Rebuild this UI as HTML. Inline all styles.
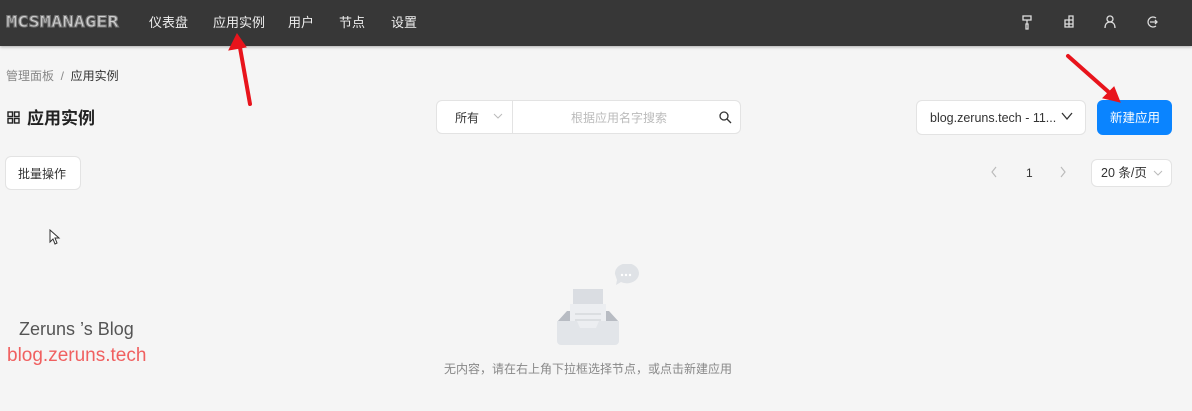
<!DOCTYPE html>
<html><head><meta charset="utf-8"><style>
*{box-sizing:border-box;margin:0;padding:0}
body{width:1192px;height:411px;background:#f5f5f5;font-family:"Liberation Sans","Noto Sans CJK SC",sans-serif;position:relative;overflow:hidden;color:#222}
.hdr{position:absolute;left:0;top:0;width:1192px;height:46px;background:#373737;box-shadow:0 1px 3px rgba(0,0,0,.3)}
.logo{position:absolute;left:6px;top:14px;font:bold 16px "DejaVu Sans Mono",monospace;color:#d0d0d0;-webkit-text-stroke:1px #777;line-height:1;transform:scaleX(1.17);transform-origin:0 0}
.nav{position:absolute;top:16px;font-size:13px;color:#eee;line-height:1}
.ab{position:absolute}
.box{position:absolute;background:#fff;border:1px solid #e3e3e3;border-radius:6px}
.t{position:absolute;white-space:nowrap;line-height:1}
</style></head><body>
<div class="hdr">
<div class="logo">MCSMANAGER</div>
<div class="nav" style="left:149px">仪表盘</div>
<div class="nav" style="left:213px">应用实例</div>
<div class="nav" style="left:288px">用户</div>
<div class="nav" style="left:339px">节点</div>
<div class="nav" style="left:391px">设置</div>
<svg class="ab" style="left:1020px;top:14px" width="150" height="16" fill="none" stroke="#ddd" stroke-width="1.3">
<rect x="3" y="2" width="8" height="4"/><path d="M7 6v4M6 10h2v5h-2z"/>
<path d="M45 6h4v4h-4zM49 6h4v4h-4zM49 2h4v4h-4zM45 10h4v3h-4zM49 10h4v3h-4z"/>
<circle cx="90" cy="5" r="3"/><path d="M85 14c0-4 2-6 5-6s5 2 5 6"/>
<path d="M136 4a5 5 0 1 0 0 8M130 8h7M135 6l2 2-2 2"/>
</svg>
</div>
<div class="t" style="left:6px;top:70px;font-size:12px;color:#888">管理面板 &nbsp;/&nbsp; <span style="color:#333">应用实例</span></div>
<svg class="ab" style="left:7px;top:111px" width="13" height="13" fill="none" stroke="#222" stroke-width="1.4"><rect x="1" y="1" width="4.5" height="4.5"/><rect x="7.5" y="1" width="4.5" height="4.5"/><rect x="1" y="7.5" width="4.5" height="4.5"/><rect x="7.5" y="7.5" width="4.5" height="4.5"/></svg>
<div class="t" style="left:27px;top:110px;font-size:17px;font-weight:bold;color:#222">应用实例</div>
<div class="box" style="left:436px;top:100px;width:305px;height:34px"></div>
<div class="ab" style="left:512px;top:101px;width:1px;height:32px;background:#e3e3e3"></div>
<div class="t" style="left:455px;top:112px;font-size:12px;color:#333">所有</div>
<svg class="ab" style="left:493px;top:113px" width="10" height="7" fill="none" stroke="#bbb"><path d="M1 1l4 4 4-4"/></svg>
<div class="t" style="left:571px;top:112px;font-size:12px;color:#bbb">根据应用名字搜索</div>
<svg class="ab" style="left:719px;top:111px" width="13" height="13" fill="none" stroke="#333" stroke-width="1.3"><circle cx="5" cy="5" r="4"/><path d="M8 8l4 4"/></svg>
<div class="box" style="left:916px;top:100px;width:170px;height:35px"></div>
<div class="t" style="left:930px;top:112px;font-size:12.5px;color:#333">blog.zeruns.tech - 11...</div>
<svg class="ab" style="left:1061px;top:112px" width="12" height="9" fill="none" stroke="#333" stroke-width="1.3"><path d="M1 1l5 6 5-6"/></svg>
<div class="ab" style="left:1097px;top:100px;width:75px;height:35px;background:#0a84ff;border-radius:6px"></div>
<div class="t" style="left:1110px;top:112px;font-size:12.5px;color:#fff">新建应用</div>
<div class="box" style="left:5px;top:156px;width:76px;height:34px"></div>
<div class="t" style="left:18px;top:168px;font-size:12px;color:#333">批量操作</div>
<svg class="ab" style="left:990px;top:166px" width="8" height="12" fill="none" stroke="#bbb" stroke-width="1.2"><path d="M6 1L2 6l4 5"/></svg>
<div class="t" style="left:1026px;top:167px;font-size:12px;color:#333">1</div>
<svg class="ab" style="left:1059px;top:166px" width="8" height="12" fill="none" stroke="#bbb" stroke-width="1.2"><path d="M2 1l4 5-4 5"/></svg>
<div class="box" style="left:1091px;top:159px;width:81px;height:28px"></div>
<div class="t" style="left:1101px;top:167px;font-size:12.5px;color:#333">20 条/页</div>
<svg class="ab" style="left:1153px;top:170px" width="10" height="7" fill="none" stroke="#bbb"><path d="M1 1l4 4 4-4"/></svg>
<svg class="ab" style="left:556px;top:264px" width="86" height="82">
<path d="M59 10a12 10 0 1 1 6 8l-5 3 1-5z" fill="#dfe2e6"/>
<circle cx="66" cy="11" r="1.2" fill="#fff"/><circle cx="70" cy="11" r="1.2" fill="#fff"/><circle cx="74" cy="11" r="1.2" fill="#fff"/>
<rect x="17" y="25" width="30" height="16" fill="#dadde2"/>
<path d="M1 58l10-11h42l10 11z" fill="#b8bcc3"/>
<rect x="14" y="40" width="36" height="28" fill="#eceef1"/>
<path d="M19 50h26M19 56h26" stroke="#d5d8dc" stroke-width="1.5"/>
<path d="M1 57h20l3 7h16l3-7h20v20a4 4 0 0 1-4 4H5a4 4 0 0 1-4-4z" fill="#e2e5e9"/>
</svg>
<div class="t" style="left:444px;top:363px;font-size:12px;color:#888">无内容，请在右上角下拉框选择节点，或点击新建应用</div>
<div class="t" style="left:19px;top:320px;font-size:18px;color:#555">Zeruns ’s Blog</div>
<div class="t" style="left:7px;top:346px;font-size:19px;color:#f06060">blog.zeruns.tech</div>
<svg class="ab" style="left:49px;top:229px" width="12" height="16"><path d="M1 1v12l3-3 2 5 2-1-2-5h4z" fill="#fff" stroke="#333"/></svg>
<svg class="ab" style="left:0;top:0" width="1192" height="140" fill="none" stroke="#e8141c" stroke-width="4" stroke-linecap="round">
<path d="M250 104L239 42"/><path d="M237 34l-8 16 17-3z" fill="#e8141c" stroke-width="1"/>
<path d="M1068 56L1112 95"/><path d="M1120 102l-17-4 11-11z" fill="#e8141c" stroke-width="1"/>
</svg>
</body></html>
